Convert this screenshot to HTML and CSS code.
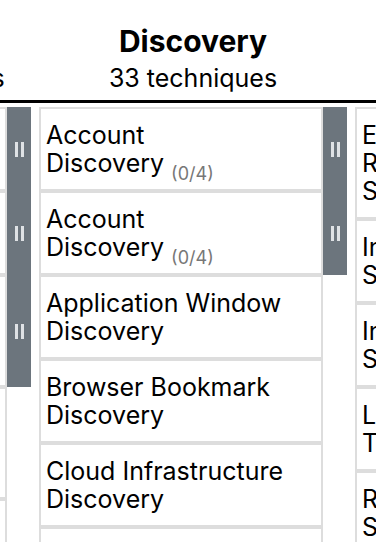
FILE: index.html
```html
<!DOCTYPE html>
<html>
<head>
   <meta charset="utf-8" />
   <title>Matrix - Discovery</title>
   <link rel="stylesheet" href="styles.css">
</head>
<body>
   <div class="matrix">
       <div class="tactic-heads">
           <div class="tactic-head col-cred">
               <div class="tactic-name">Credential Access</div>
               <div class="tactic-count">17 techniques</div>
           </div>
           <div class="tactic-head col-disc">
               <div class="tactic-name">Discovery</div>
               <div class="tactic-count">33 techniques</div>
           </div>
           <div class="tactic-head col-lat">
               <div class="tactic-name">Lateral Movement</div>
               <div class="tactic-count">9 techniques</div>
           </div>
       </div>
       <div class="tactic-cols">
           <div class="tactic col-cred">
               <div class="technique">
                   <div class="name">Brute Force&nbsp;<sub>(0/4)</sub></div>
                   <div class="sidebar"><span class="grip"></span></div>
               </div>
               <div class="technique">
                   <div class="name">Input Capture&nbsp;<sub>(0/4)</sub></div>
                   <div class="sidebar"><span class="grip"></span></div>
               </div>
               <div class="technique">
                   <div class="name">Modify Authentication Process&nbsp;<sub>(0/8)</sub></div>
                   <div class="sidebar"><span class="grip"></span></div>
               </div>
               <div class="technique">
                   <div class="name">Multi-Factor Authentication Interception</div>
                   <div class="nosub"></div>
               </div>
               <div class="technique">
                   <div class="name">Network Sniffing</div>
                   <div class="nosub"></div>
               </div>
           </div>
           <div class="tactic col-disc">
               <div class="technique">
                   <div class="name">Account Discovery&nbsp;<sub>(0/4)</sub></div>
                   <div class="sidebar"><span class="grip"></span></div>
               </div>
               <div class="technique">
                   <div class="name">Account Discovery&nbsp;<sub>(0/4)</sub></div>
                   <div class="sidebar"><span class="grip"></span></div>
               </div>
               <div class="technique">
                   <div class="name">Application Window Discovery</div>
                   <div class="nosub"></div>
               </div>
               <div class="technique">
                   <div class="name">Browser Bookmark Discovery</div>
                   <div class="nosub"></div>
               </div>
               <div class="technique">
                   <div class="name">Cloud Infrastructure Discovery</div>
                   <div class="nosub"></div>
               </div>
               <div class="technique">
                   <div class="name">Cloud Service Dashboard</div>
                   <div class="nosub"></div>
               </div>
           </div>
           <div class="tactic col-lat">
               <div class="technique">
                   <div class="name">Exploitation of Remote Services</div>
                   <div class="nosub"></div>
               </div>
               <div class="technique">
                   <div class="name">Internal Spearphishing</div>
                   <div class="nosub"></div>
               </div>
               <div class="technique">
                   <div class="name">Internal Spearphishing</div>
                   <div class="nosub"></div>
               </div>
               <div class="technique">
                   <div class="name">Lateral Tool Transfer</div>
                   <div class="nosub"></div>
               </div>
               <div class="technique">
                   <div class="name">Remote Service Session Hijacking</div>
                   <div class="nosub"></div>
               </div>
           </div>
       </div>
   </div>
</body>
</html>
```
FILE: styles.css
```css
body, html {
    margin: 0;
    overflow: hidden;
    width: 100%;
    height: 100%;
    background-color: #fff;
}
body {
    font-family: "Inter", "Liberation Sans", sans-serif;
    color: #000;
}
.matrix {
    margin-left: -183px; /* matrix is scrolled to the Discovery column */
}
.tactic-heads, .tactic-cols {
    display: flex;
    gap: 8px;
}
.tactic-heads {
    height: 100px;
    align-items: flex-end;
    border-bottom: 3px solid #000;
}
.tactic-cols {
    align-items: flex-start;
    padding-top: 4px;
}
.col-cred {
    width: 214px;
    flex: none;
}
.col-disc {
    width: 308px;
    flex: none;
}
.col-lat {
    width: 223px;
    flex: none;
}
.tactic-head {
    text-align: center;
    padding-bottom: 5px;
}
.tactic-name {
    font-size: 30px;
    font-weight: 700;
    line-height: 36px;
    margin-bottom: 2px;
}
.tactic-count {
    font-size: 25px;
    line-height: 34px;
}
.technique {
    display: flex;
}
.name {
    flex: 1;
    border: 2px solid #ddd;
    padding: 12px 10px 12px 5px;
    font-size: 25px;
    line-height: 28px;
}
.name sub {
    font-size: 18px;
    line-height: 0;
    vertical-align: -8px;
    color: #777;
}
.sidebar, .nosub {
    width: 24px;
    flex: none;
}
.sidebar {
    background-color: #6c757d;
    display: flex;
    align-items: center;
    justify-content: center;
}
/* the two bars of the sub-technique toggle */
.grip {
    width: 3px;
    height: 15px;
    border-left: 3px solid #dfe2e5;
    border-right: 3px solid #dfe2e5;
}
```
